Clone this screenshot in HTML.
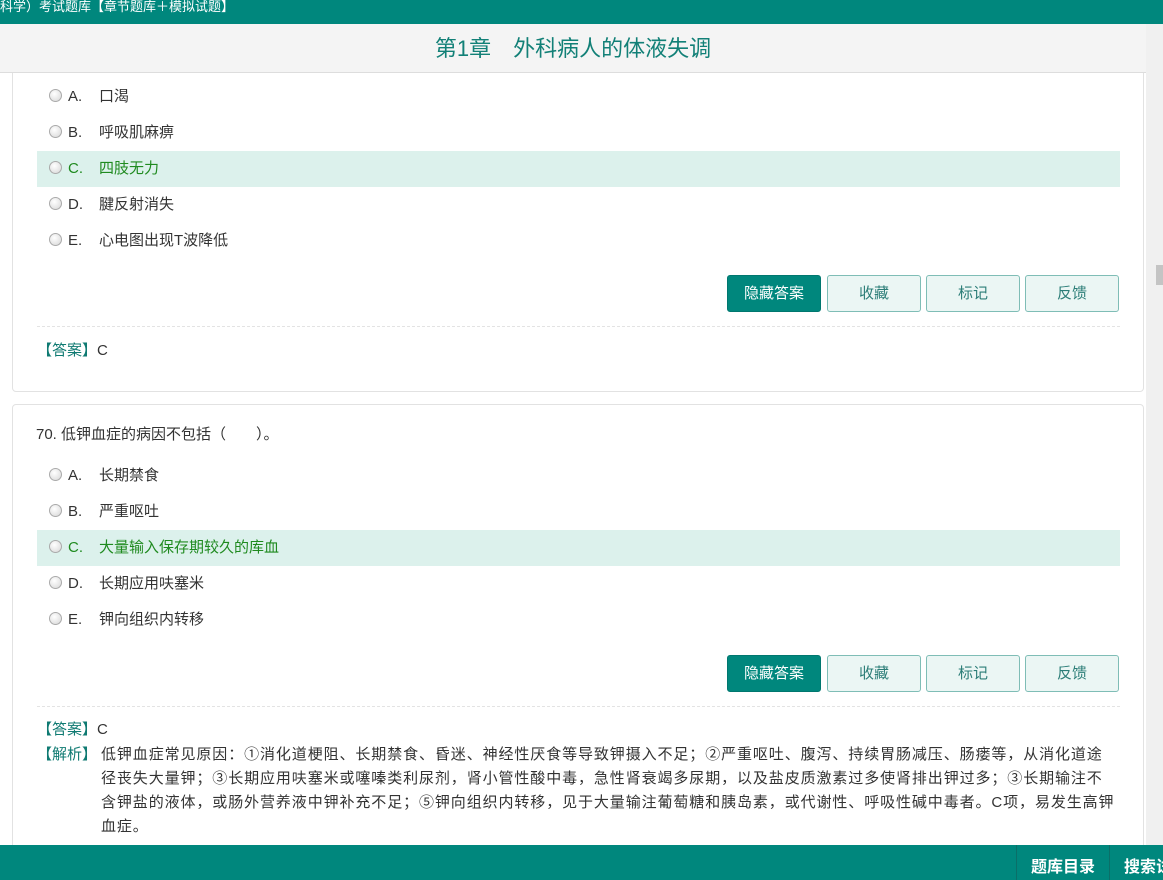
<!DOCTYPE html>
<html><head><meta charset="utf-8"><style>
*{margin:0;padding:0;box-sizing:border-box}
body{width:1163px;height:880px;overflow:hidden;background:#fff;font-family:"Liberation Sans","Microsoft YaHei","Noto Sans CJK SC",sans-serif;font-size:15px;color:#333;position:relative}
.top{position:absolute;z-index:5;left:0;top:0;width:1163px;height:24px;background:#00877d;color:#fff;font-size:13px;line-height:14px;white-space:nowrap;overflow:hidden}
.hdr{position:absolute;z-index:5;left:0;top:24px;width:1146px;height:49px;background:#f4f4f4;border-bottom:1px solid #ddd;text-align:center;line-height:50px;font-size:22px;color:#128077}
.sb{position:absolute;left:1146px;top:24px;width:17px;height:821px;background:#f0f0f0}
.thumb{position:absolute;left:1156px;top:265px;width:7px;height:20px;background:#c4c4c4}
.card{position:absolute;left:12px;width:1132px;border:1px solid #e2e2e2;border-radius:4px;background:#fff}
.opt{position:absolute;left:24px;width:1083px;height:36px;line-height:36px;padding-left:12px}
.opt.on{background:#dcf1ec;color:#1f8a1f}
.rad{display:inline-block;width:13px;height:13px;border-radius:50%;border:1px solid #aaa;background:radial-gradient(circle at 40% 35%,#fff,#d6d6d6);vertical-align:-1px;margin-right:6px}
.lt{display:inline-block;width:31px}
.btn{position:absolute;width:94px;height:37px;border:1px solid #7fbdb6;border-radius:3px;background:#ebf6f4;color:#2b7d77;text-align:center;line-height:35px;font-size:15px}
.btn.p{background:#00877d;border-color:#00776f;color:#fff}
.dash{position:absolute;left:24px;width:1083px;border-top:1px dashed #e3e3e3}
.ak{color:#0f7a72}
.foot{position:absolute;z-index:5;left:0;top:845px;width:1163px;height:35px;background:#00877d;color:#fff;font-weight:bold;font-size:16px}
.foot span{position:absolute;top:0;height:35px;border-left:1px solid #0b6f68;padding-left:14px;line-height:46px;white-space:nowrap;overflow:hidden}
</style></head><body>
<div class="top">科学）考试题库【章节题库＋模拟试题】</div>
<div class="hdr">第1章　外科病人的体液失调</div>
<div class="card" style="top:60px;height:332px">
 <div class="opt" style="top:18px"><span class="rad"></span><span class="lt">A.</span>口渴</div>
 <div class="opt" style="top:54px"><span class="rad"></span><span class="lt">B.</span>呼吸肌麻痹</div>
 <div class="opt on" style="top:90px"><span class="rad"></span><span class="lt">C.</span>四肢无力</div>
 <div class="opt" style="top:126px"><span class="rad"></span><span class="lt">D.</span>腱反射消失</div>
 <div class="opt" style="top:162px"><span class="rad"></span><span class="lt">E.</span>心电图出现T波降低</div>
 <div class="btn p" style="left:714px;top:214px">隐藏答案</div>
 <div class="btn" style="left:814px;top:214px">收藏</div>
 <div class="btn" style="left:913px;top:214px">标记</div>
 <div class="btn" style="left:1012px;top:214px">反馈</div>
 <div class="dash" style="top:265px"></div>
 <div style="position:absolute;left:24px;top:280px;line-height:20px"><span class="ak">【答案】</span>C</div>
</div>
<div class="card" style="top:404px;height:460px">
 <div style="position:absolute;left:23px;top:20px;line-height:20px">70. 低钾血症的病因不包括（　　）。</div>
 <div class="opt" style="top:53px"><span class="rad"></span><span class="lt">A.</span>长期禁食</div>
 <div class="opt" style="top:89px"><span class="rad"></span><span class="lt">B.</span>严重呕吐</div>
 <div class="opt on" style="top:125px"><span class="rad"></span><span class="lt">C.</span>大量输入保存期较久的库血</div>
 <div class="opt" style="top:161px"><span class="rad"></span><span class="lt">D.</span>长期应用呋塞米</div>
 <div class="opt" style="top:197px"><span class="rad"></span><span class="lt">E.</span>钾向组织内转移</div>
 <div class="btn p" style="left:714px;top:250px">隐藏答案</div>
 <div class="btn" style="left:814px;top:250px">收藏</div>
 <div class="btn" style="left:913px;top:250px">标记</div>
 <div class="btn" style="left:1012px;top:250px">反馈</div>
 <div class="dash" style="top:301px"></div>
 <div style="position:absolute;left:24px;top:314px;line-height:22px"><span class="ak">【答案】</span>C</div>
 <div style="position:absolute;left:24px;top:338px;line-height:24px;width:1100px;white-space:nowrap"><span class="ak" style="position:absolute;left:0">【解析】</span><div style="margin-left:64px;letter-spacing:0.9px">低钾血症常见原因：①消化道梗阻、长期禁食、昏迷、神经性厌食等导致钾摄入不足；②严重呕吐、腹泻、持续胃肠减压、肠瘘等，从消化道途<br>径丧失大量钾；③长期应用呋塞米或噻嗪类利尿剂，肾小管性酸中毒，急性肾衰竭多尿期，以及盐皮质激素过多使肾排出钾过多；③长期输注不<br>含钾盐的液体，或肠外营养液中钾补充不足；⑤钾向组织内转移，见于大量输注葡萄糖和胰岛素，或代谢性、呼吸性碱中毒者。C项，易发生高钾<br>血症。</div></div>
</div>
<div class="sb"></div><div class="thumb"></div>
<div class="foot"><span style="left:1016px;width:93px">题库目录</span><span style="left:1109px;width:54px">搜索试题</span></div>
</body></html>
